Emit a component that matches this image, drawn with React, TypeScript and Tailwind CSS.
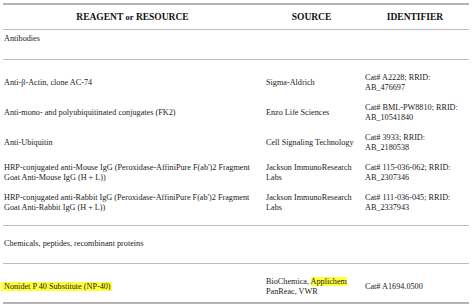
const rows = [
  {
    name: <>Anti-β-Actin, clone AC-74</>,
    source: <>Sigma-Aldrich</>,
    id: <>Cat# A2228; RRID:<br />AB_476697</>,
  },
  {
    name: <>Anti-mono- and polyubiquitinated conjugates (FK2)</>,
    source: <>Enzo Life Sciences</>,
    id: <>Cat# BML-PW8810; RRID:<br />AB_10541840</>,
  },
  {
    name: <>Anti-Ubiquitin</>,
    source: <>Cell Signaling Technology</>,
    id: <>Cat# 3933; RRID:<br />AB_2180538</>,
  },
  {
    name: <>HRP-conjugated anti-Mouse IgG (Peroxidase-AffiniPure F(ab')2 Fragment<br />Goat Anti-Mouse IgG (H + L))</>,
    source: <>Jackson ImmunoResearch<br />Labs</>,
    id: <>Cat# 115-036-062; RRID:<br />AB_2307346</>,
  },
  {
    name: <>HRP-conjugated anti-Rabbit IgG (Peroxidase-AffiniPure F(ab')2 Fragment<br />Goat Anti-Rabbit IgG (H + L))</>,
    source: <>Jackson ImmunoResearch<br />Labs</>,
    id: <>Cat# 111-036-045; RRID:<br />AB_2337943</>,
  },
];

const Row = ({ name, source, id }: { name: React.ReactNode; source: React.ReactNode; id: React.ReactNode }) => (
  <div className="grid grid-cols-[259px_99px_108px] h-[30px] items-center">
    <div className="pl-[1px] whitespace-nowrap">{name}</div>
    <div className="pl-[4px] whitespace-nowrap">{source}</div>
    <div className="pl-[4px] whitespace-nowrap">{id}</div>
  </div>
);

export default function App() {
  return (
    <div className="w-[474px] h-[307px] bg-white overflow-hidden pt-[3px] pl-[3px] text-[#222] text-[8.2px] leading-[10.5px] [font-family:Liberation_Serif,serif]">
      <div className="w-[466px] border-t-2 border-b-2 border-[#b4b4b4]">
        <div className="grid grid-cols-[259px_99px_108px] h-[24px] items-center text-[9.5px] font-bold text-[#111]">
          <div className="text-center">REAGENT <span className="text-[8.5px]">or</span> RESOURCE</div>
          <div className="text-center">SOURCE</div>
          <div className="text-center">IDENTIFIER</div>
        </div>
        <div className="border-t border-[#bcbcbc] h-[30px] pt-[4px] pl-[1px]">Antibodies</div>
        <div className="border-t border-[#bcbcbc] pt-[8px] pb-[7px]">
          {rows.map((r, i) => (
            <Row key={i} {...r} />
          ))}
        </div>
        <div className="border-t border-[#bcbcbc] h-[38px] flex items-center pl-[1px]">
          Chemicals, peptides, recombinant proteins
        </div>
        <div className="border-t border-[#bcbcbc] pt-[8px]">
          <Row
            name={<span className="bg-[#ffff3a] -ml-[3px] pl-[3px] pr-[1px]">Nonidet P 40 Substitute (NP-40)</span>}
            source={<>BioChemica, <span className="bg-[#ffff3a]">Applichem</span><br />PanReac, VWR</>}
            id={<>Cat# A1694.0500</>}
          />
        </div>
      </div>
    </div>
  );
}
